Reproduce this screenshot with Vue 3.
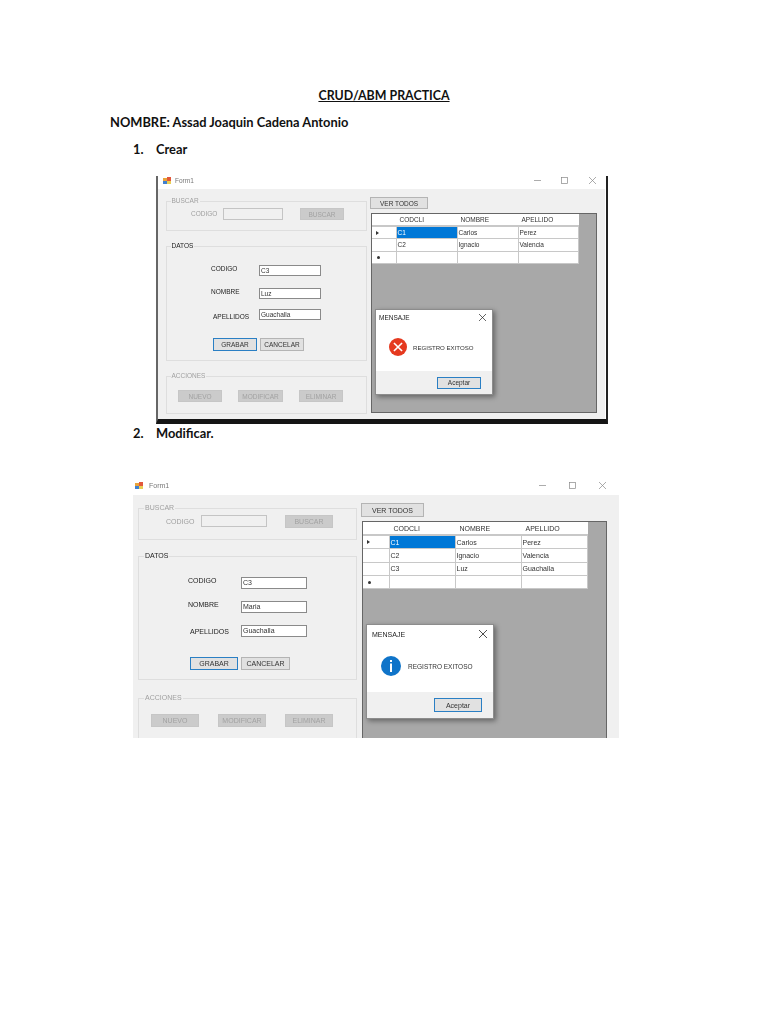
<script setup>
const forms = [
  {
    cls: 'win-a', nombre: 'Luz', icon: 'error',
    rows: [['C1', 'Carlos', 'Perez'], ['C2', 'Ignacio', 'Valencia']],
  },
  {
    cls: 'win-b', nombre: 'Maria', icon: 'info',
    rows: [['C1', 'Carlos', 'Perez'], ['C2', 'Ignacio', 'Valencia'], ['C3', 'Luz', 'Guachalla']],
  },
]
const steps = ['Crear', 'Modificar.']
</script>

<template>
  <div class="page">
    <h1 class="title">CRUD/ABM PRACTICA</h1>
    <p class="name">NOMBRE: Assad Joaquin Cadena Antonio</p>

    <template v-for="(f, i) in forms" :key="f.cls">
      <p class="step" :class="'step-' + (i + 1)"><span class="num">{{ i + 1 }}.</span>{{ steps[i] }}</p>
      <div class="win" :class="f.cls">
        <div class="titlebar">
          <svg class="appicon" viewBox="0 0 8 8">
            <rect x="0" y="1" width="4" height="3" fill="#e8a33a" />
            <rect x="4" y="0" width="4" height="4" fill="#e2583c" />
            <rect x="0" y="4" width="4" height="3" fill="#3f7fd0" />
            <rect x="4" y="4" width="4" height="3" fill="#e9cf55" />
          </svg>
          <span class="caption">Form1</span>
          <span class="ctl"><svg viewBox="0 0 8 8"><path d="M0 4H8" /></svg></span>
          <span class="ctl"><svg viewBox="0 0 8 8"><rect x=".5" y=".5" width="7" height="7" /></svg></span>
          <span class="ctl"><svg viewBox="0 0 8 8"><path d="M0 0L8 8M8 0L0 8" /></svg></span>
        </div>

        <div class="body">
          <div class="leftcol">
            <fieldset class="group g-buscar off">
              <legend>BUSCAR</legend>
              <div class="search">
                <span class="s-label">CODIGO</span>
                <span class="input disabled"></span>
                <button class="btn disabled">BUSCAR</button>
              </div>
            </fieldset>

            <fieldset class="group g-datos">
              <legend>DATOS</legend>
              <div class="fields">
                <span class="f-label l1">CODIGO</span><span class="input">C3</span>
                <span class="f-label l2">NOMBRE</span><span class="input">{{ f.nombre }}</span>
                <span class="f-label l3">APELLIDOS</span><span class="input">Guachalla</span>
              </div>
              <div class="actions">
                <button class="btn default">GRABAR</button>
                <button class="btn">CANCELAR</button>
              </div>
            </fieldset>

            <fieldset class="group g-acciones off">
              <legend>ACCIONES</legend>
              <div class="toolbar">
                <button class="btn disabled">NUEVO</button>
                <button class="btn disabled">MODIFICAR</button>
                <button class="btn disabled">ELIMINAR</button>
              </div>
            </fieldset>
          </div>

          <div class="rightcol">
            <button class="btn vertodos">VER TODOS</button>
            <div class="gridarea">
              <table class="dgv">
                <thead>
                  <tr><th class="rh"></th><th>CODCLI</th><th>NOMBRE</th><th>APELLIDO</th></tr>
                </thead>
                <tbody>
                  <tr v-for="(r, ri) in f.rows" :key="r[0]">
                    <td class="rh"><span v-if="ri === 0" class="arrow"></span></td>
                    <td :class="{ sel: ri === 0 }">{{ r[0] }}</td>
                    <td>{{ r[1] }}</td>
                    <td>{{ r[2] }}</td>
                  </tr>
                  <tr>
                    <td class="rh"><span class="star"></span></td><td></td><td></td><td></td>
                  </tr>
                </tbody>
              </table>

              <div class="dialog">
                <div class="d-head">
                  <span>MENSAJE</span>
                  <svg class="d-x" viewBox="0 0 8 8"><path d="M0 0L8 8M8 0L0 8" /></svg>
                </div>
                <div class="d-body">
                  <svg v-if="f.icon === 'error'" class="d-icon" viewBox="0 0 20 20">
                    <circle cx="10" cy="10" r="10" fill="#e5391f" />
                    <path d="M5.5 5.5L14.5 14.5M14.5 5.5L5.5 14.5" stroke="#fff" stroke-width="1.8" fill="none" />
                  </svg>
                  <svg v-else class="d-icon" viewBox="0 0 20 20">
                    <circle cx="10" cy="10" r="10" fill="#0f74c9" />
                    <rect x="9" y="4" width="2" height="2" fill="#fff" />
                    <rect x="9" y="7.5" width="2" height="8.5" fill="#fff" />
                  </svg>
                  <span class="d-text">REGISTRO EXITOSO</span>
                </div>
                <div class="d-foot">
                  <button class="btn default">Aceptar</button>
                </div>
              </div>
            </div>
          </div>
        </div>
      </div>
    </template>
  </div>
</template>

<style>
html, body { margin: 0; background: #fff; }
</style>

<style scoped>
.page {
  width: 768px;
  height: 1024px;
  box-sizing: border-box;
  padding-top: 88px;
  background: #fff;
  overflow: hidden;
  font-family: Lato, "Open Sans", sans-serif;
  color: #111;
}
.title {
  margin: 0;
  font-size: 12.4px;
  line-height: 16px;
  font-weight: 700;
  text-align: center;
  text-decoration: underline;
}
.name {
  margin: 10px 0 0 110px;
  font-size: 12.85px;
  line-height: 16px;
  font-weight: 700;
}
.step {
  margin: 11px 0 0 133px;
  font-size: 12.85px;
  line-height: 16px;
  font-weight: 700;
  display: flex;
}
.num { width: 23px; }
.step-2 { margin-top: 1px; }

/* ---------- window ---------- */
.win {
  box-sizing: border-box;
  background: #fff;
  font-family: "Liberation Sans", Arial, sans-serif;
  color: #333;
  display: flex;
  flex-direction: column;
  overflow: hidden;
  filter: blur(0.45px);
}
.win-a {
  margin: 19px 0 0 156px;
  width: 452px;
  height: 248px;
  border-left: 2px solid #666;
  border-right: 2px solid #222;
  border-bottom: 5px solid #151515;
  font-size: 6.5px;
}
.win-b {
  margin: 38px 0 0 133px;
  width: 486px;
  height: 259px;
  font-size: 7px;
}
.titlebar { display: flex; align-items: center; flex: none; box-sizing: border-box; }
.win-a .titlebar { height: 13px; padding: 0 0 4px 5px; }
.win-b .titlebar { height: 16px; padding: 0 0 3px 2px; }
.appicon { width: 8px; height: 8px; flex: none; }
.caption { color: #777; flex: 1; }
.win-a .caption { margin-left: 4px; }
.win-b .caption { margin-left: 6px; }
.ctl { display: flex; }
.ctl svg { width: 7px; height: 7px; fill: none; stroke: #888; stroke-width: .8; }
.win-a .ctl { margin-right: 20px; }
.win-a .ctl:nth-child(4) { margin-right: 21px; }
.win-a .ctl:last-child { margin-right: 10px; }
.win-b .ctl { margin-right: 23px; }
.win-b .ctl:last-child { margin-right: 13px; }

.body { flex: 1; min-height: 0; background: #f0f0f0; display: flex; align-items: flex-start; }
.win-a .body { padding: 8px 0 0 8px; gap: 3px; margin-right: 1px; }
.win-b .body { padding: 9px 0 0 5px; gap: 4px; }

/* ---------- groups ---------- */
.leftcol { display: flex; flex-direction: column; flex: none; }
.win-a .leftcol { width: 201px; gap: 11px; }
.win-b .leftcol { width: 219px; }
.group {
  margin: 0;
  padding: 0;
  min-width: 0;
  box-sizing: border-box;
  border: 1px solid #dedede;
}
legend {
  padding: 0 1px;
  line-height: 8px;
  color: #222;
}
.win-a legend { margin-left: 3.5px; }
.win-b legend { margin-left: 5px; }
.off legend { color: #a0a0a0; }
.win-a .g-buscar { height: 34px; }
.win-a .g-datos { height: 119px; }
.win-a .g-acciones { height: 42px; }
.win-b .g-buscar { height: 36px; }
.win-b .g-datos { height: 128px; margin-top: 12px; }
.win-b .g-acciones { height: 45px; margin-top: 14px; }

.input {
  box-sizing: border-box;
  display: block;
  background: #fff;
  border: 1px solid #8a8a8a;
  padding-left: 1px;
  color: #333;
  white-space: nowrap;
}
.input.disabled { background: #f0f0f0; border-color: #c4c4c4; }
.btn {
  box-sizing: border-box;
  padding: 0;
  margin: 0;
  font: inherit;
  color: #333;
  background: #e1e1e1;
  border: 1px solid #b4b4b4;
  text-align: center;
  white-space: nowrap;
}
.btn.disabled { background: #cbcbcb; border-color: #c6c6c6; color: #a2a2a2; }
.btn.default { border-color: #2a7fc4; border-width: 1px; }

.search { display: flex; align-items: center; }
.s-label { color: #a0a0a0; }
.win-a .search { padding: 2px 0 0 24px; }
.win-a .s-label { width: 32px; }
.win-a .search .input { width: 60px; height: 12px; }
.win-a .search .btn { width: 44px; height: 12px; margin: 1px 0 0 17px; }
.win-b .search { padding: 2px 0 0 27px; }
.win-b .s-label { width: 35px; }
.win-b .search .input { width: 66px; height: 12px; }
.win-b .search .btn { width: 48px; height: 13px; margin: 1px 0 0 18px; }

.fields { display: grid; align-items: start; }
.f-label { white-space: nowrap; color: #222; }
.win-a .fields { grid-template-columns: 48px 62px; grid-template-rows: 23px 21px 11px; padding: 15px 0 0 44px; }
.win-a .f-label { line-height: 11px; margin-top: -2.5px; }
.win-a .l3 { margin: 1.5px 0 0 2px; }
.win-a .input { height: 11px; line-height: 9px; }
.win-b .fields { grid-template-columns: 53px 66px; grid-template-rows: 24px 24px 12px; padding: 17px 0 0 49px; }
.win-b .f-label { line-height: 12px; margin-top: -2px; }
.win-b .l3 { margin: 1px 0 0 2px; }
.win-b .input { height: 12px; line-height: 10px; }

.actions { display: flex; }
.win-a .actions { gap: 3px; padding: 18px 0 0 46px; }
.win-a .actions .btn { width: 44px; height: 13px; }
.win-b .actions { gap: 3px; padding: 20px 0 0 51px; }
.win-b .actions .btn { width: 48px; height: 13px; }
.win-b .actions .btn:last-child { width: 49px; }

.toolbar { display: flex; }
.win-a .toolbar { padding: 10px 0 0 11px; gap: 16px; }
.win-a .toolbar .btn { width: 44px; height: 12px; }
.win-a .toolbar .btn:nth-child(2) { width: 45px; }
.win-b .toolbar { padding: 12px 0 0 12px; gap: 19px; }
.win-b .toolbar .btn { width: 48px; height: 13px; }

/* ---------- data grid ---------- */
.rightcol { display: flex; flex-direction: column; align-items: flex-start; flex: none; }
.win-a .rightcol { width: 227px; }
.win-b .rightcol { width: 246px; margin-top: -1px; }
.win-a .vertodos { width: 58px; height: 12px; }
.win-b .vertodos { width: 63px; height: 14px; }
.gridarea {
  position: relative;
  box-sizing: border-box;
  background: #a8a8a8;
  border: 1px solid #666;
}
.win-a .gridarea { width: 226px; height: 200px; margin: 4px 0 0 1px; }
.win-b .gridarea { width: 245px; height: 220px; margin: 4px 0 0 1px; }
.dgv {
  border-collapse: collapse;
  table-layout: fixed;
  background: #fff;
}
.win-a .dgv { width: 205px; }
.win-b .dgv { width: 224px; }
.dgv th, .dgv td {
  box-sizing: border-box;
  padding: 0 0 0 1px;
  border-right: 1px solid #c8c8c8;
  border-bottom: 1px solid #c8c8c8;
  font-weight: 400;
  text-align: left;
  white-space: nowrap;
  overflow: hidden;
}
.dgv th { padding-left: 3px; border-right-color: #fff; border-bottom: 2px solid #c8c8c8; }
.win-b .dgv th { padding-left: 4px; }
.win-a .dgv tr { height: 12.4px; }
.win-b .dgv tr { height: 13.4px; }
.win-a .dgv .rh { width: 24px; }
.win-b .dgv .rh { width: 26px; }
.win-a .dgv th:nth-child(n+2) { width: 61px; }
.win-a .dgv th:last-child { width: 60px; }
.win-b .dgv th:nth-child(n+2) { width: 66px; }
.dgv .sel { background: #0078d7; color: #fff; }
.rh { position: relative; }
.arrow {
  display: block;
  margin-left: 3px;
  width: 0;
  height: 0;
  border-left: 3px solid #333;
  border-top: 2.5px solid transparent;
  border-bottom: 2.5px solid transparent;
}
.star {
  display: block;
  margin-left: 4px;
  width: 3px;
  height: 3px;
  border-radius: 50%;
  background: #333;
}

/* ---------- message box ---------- */
.dialog {
  position: absolute;
  box-sizing: border-box;
  display: flex;
  flex-direction: column;
  background: #fff;
  border: 1px solid #8c8c8c;
  box-shadow: 2px 2px 5px rgba(0, 0, 0, .4);
}
.win-a .dialog { left: 3px; top: 95px; width: 118px; height: 86px; }
.win-b .dialog { left: 3px; top: 102px; width: 128px; height: 95px; }
.d-head { display: flex; justify-content: space-between; align-items: center; flex: none; color: #222; box-sizing: border-box; }
.win-a .d-head { padding: 1px 6px 0 3px; height: 14px; }
.win-b .d-head { padding: 1px 6px 0 5px; height: 17px; }
.d-x { fill: none; stroke: #222; stroke-width: .8; }
.win-a .d-x { width: 7px; height: 7px; }
.win-b .d-x { width: 8px; height: 8px; }
.d-body { flex: 1; display: flex; align-items: center; }
.win-a .d-body { padding: 0 0 1px 13px; gap: 6px; }
.win-b .d-body { padding: 0 0 2px 14px; gap: 7px; }
.win-a .d-icon { width: 18px; height: 18px; }
.win-b .d-icon { width: 20px; height: 20px; }
.d-text { white-space: nowrap; color: #333; }
.win-a .d-text { font-size: 6.1px; }
.win-b .d-text { font-size: 6.5px; }
.d-foot { flex: none; background: #f0f0f0; display: flex; justify-content: flex-end; align-items: center; }
.win-a .d-foot { height: 23px; padding-right: 11px; }
.win-b .d-foot { height: 26px; padding-right: 11px; }
.win-a .d-foot .btn { width: 44px; height: 12px; }
.win-b .d-foot .btn { width: 48px; height: 14px; }
</style>
